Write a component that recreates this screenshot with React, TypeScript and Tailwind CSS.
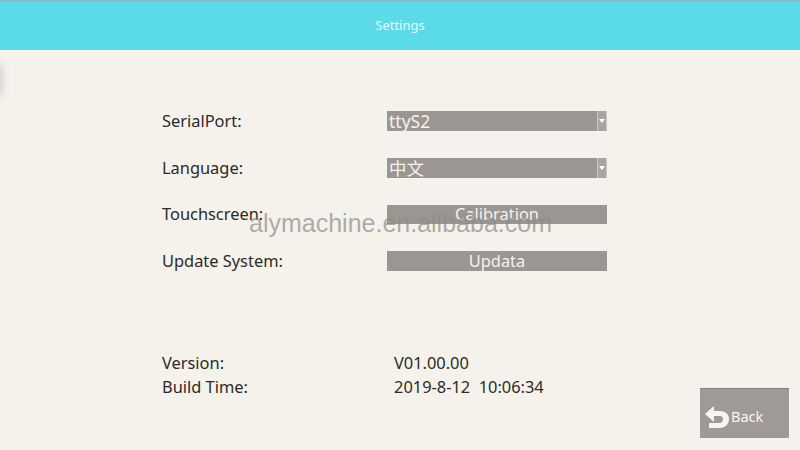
import React from 'react';

const fontStack = "font-['Noto_Sans','Noto_Sans_CJK_SC',sans-serif]";

const SelectBox = ({ value }: { value: string }) => (
  <div className="w-[220px] h-[20px] bg-[#9c9692] flex items-center justify-between text-[#f5f2ee] text-[17.5px] pl-[2px]">
    <span>{value}</span>
    <div className="w-[10px] h-[20px] bg-[#aaa5a1] border-x border-[#cbc7c3] flex items-center justify-center">
      <div className="w-0 h-0 border-x-[3px] border-x-transparent border-t-[4px] border-t-white" />
    </div>
  </div>
);

const ActionButton = ({ label, short }: { label: string; short?: boolean }) => (
  <button
    className={`w-[220px] ${short ? 'h-[19px]' : 'h-[20px]'} bg-[#9c9692] flex items-center justify-center text-[#f5f2ee] text-[16.4px] leading-none`}
  >
    {label}
  </button>
);

const Row = ({ label, children }: { label: string; children: React.ReactNode }) => (
  <div className="flex items-center">
    <div className="w-[225px] text-[16.4px] leading-none text-[#2b2a29]">{label}</div>
    {children}
  </div>
);

const App: React.FC = () => {
  return (
    <div className={`relative w-[800px] h-[450px] overflow-hidden flex flex-col bg-[#f5f2eb] ${fontStack}`}>
      {/* Header */}
      <div className="h-[50px] shrink-0 bg-[#5bdbe8] border-t-2 border-[#8fb5c8] flex items-center justify-center text-[13px] text-[#eafafc]">
        Settings
      </div>

      {/* Settings rows */}
      <div className="pl-[162px] pt-[61px] flex flex-col gap-[27px]">
        <Row label="SerialPort:">
          <SelectBox value="ttyS2" />
        </Row>
        <Row label="Language:">
          <SelectBox value="中文" />
        </Row>
        <Row label="Touchscreen:">
          <ActionButton label="Calibration" short />
        </Row>
        <Row label="Update System:">
          <ActionButton label="Updata" />
        </Row>
      </div>

      {/* Version info */}
      <div className="pl-[162px] pt-[81px] flex flex-col gap-[2px] text-[16.4px] leading-[22px] text-[#2b2a29]">
        <div className="flex">
          <span className="w-[232px]">Version:</span>
          <span>V01.00.00</span>
        </div>
        <div className="flex">
          <span className="w-[232px]">Build Time:</span>
          <span className="whitespace-pre">2019-8-12  10:06:34</span>
        </div>
      </div>

      {/* Back */}
      <button className="absolute left-[700px] top-[388px] w-[89px] h-[50px] bg-[#9f9a96] border-t border-[#85807c] flex items-center pl-[4px] pt-[6px] gap-[1px] text-[#f8f6f3] text-[14.5px]">
        <svg width="26" height="26" viewBox="0 0 26 26" fill="none">
          <path d="M1 10 L10 2 V7 H16 C22 7 25 11 25 15 C25 20 21 24 16 24 H5 V19 H15 C18 19 19 17 19 15 C19 13 18 12 15 12 H10 V18 Z" fill="#f7f5f2" />
        </svg>
        <span>Back</span>
      </button>

      {/* Smudge on the left edge */}
      <div className="absolute -left-[6px] top-[64px] w-[9px] h-[32px] rounded-full bg-[#d6d3cf] blur-[3px]" />

      {/* Watermark */}
      <div className="absolute left-[249px] top-[208px] font-['Liberation_Sans',sans-serif] text-[25px] leading-[30px] text-[#8a8a8a]/70 pointer-events-none">
        alymachine.en.alibaba.com
      </div>
    </div>
  );
};

export default App;
